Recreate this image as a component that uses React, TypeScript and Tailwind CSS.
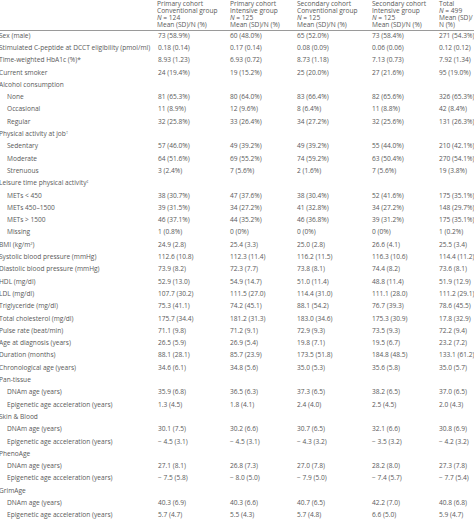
import React from "react";

type Row = { label: React.ReactNode; indent?: boolean; values?: string[] };

const rows: Row[] = [
  { label: "Sex (male)", values: ["73 (58.9%)", "60 (48.0%)", "65 (52.0%)", "73 (58.4%)", "271 (54.3%)"] },
  { label: "Stimulated C-peptide at DCCT eligibility (pmol/ml)", values: ["0.18 (0.14)", "0.17 (0.14)", "0.08 (0.09)", "0.06 (0.06)", "0.12 (0.12)"] },
  { label: "Time-weighted HbA1c (%)*", values: ["8.93 (1.23)", "6.93 (0.72)", "8.73 (1.18)", "7.13 (0.73)", "7.92 (1.34)"] },
  { label: "Current smoker", values: ["24 (19.4%)", "19 (15.2%)", "25 (20.0%)", "27 (21.6%)", "95 (19.0%)"] },
  { label: "Alcohol consumption" },
  { label: "None", indent: true, values: ["81 (65.3%)", "80 (64.0%)", "83 (66.4%)", "82 (65.6%)", "326 (65.3%)"] },
  { label: "Occasional", indent: true, values: ["11 (8.9%)", "12 (9.6%)", "8 (6.4%)", "11 (8.8%)", "42 (8.4%)"] },
  { label: "Regular", indent: true, values: ["32 (25.8%)", "33 (26.4%)", "34 (27.2%)", "32 (25.6%)", "131 (26.3%)"] },
  { label: <>Physical activity at job<sup className="text-[4px]">†</sup></> },
  { label: "Sedentary", indent: true, values: ["57 (46.0%)", "49 (39.2%)", "49 (39.2%)", "55 (44.0%)", "210 (42.1%)"] },
  { label: "Moderate", indent: true, values: ["64 (51.6%)", "69 (55.2%)", "74 (59.2%)", "63 (50.4%)", "270 (54.1%)"] },
  { label: "Strenuous", indent: true, values: ["3 (2.4%)", "7 (5.6%)", "2 (1.6%)", "7 (5.6%)", "19 (3.8%)"] },
  { label: <>Leisure time physical activity<sup className="text-[4px]">‡</sup></> },
  { label: "METs < 450", indent: true, values: ["38 (30.7%)", "47 (37.6%)", "38 (30.4%)", "52 (41.6%)", "175 (35.1%)"] },
  { label: "METs 450–1500", indent: true, values: ["39 (31.5%)", "34 (27.2%)", "41 (32.8%)", "34 (27.2%)", "148 (29.7%)"] },
  { label: "METs > 1500", indent: true, values: ["46 (37.1%)", "44 (35.2%)", "46 (36.8%)", "39 (31.2%)", "175 (35.1%)"] },
  { label: "Missing", indent: true, values: ["1 (0.8%)", "0 (0%)", "0 (0%)", "0 (0%)", "1 (0.2%)"] },
  { label: <>BMI (kg/m<sup className="text-[4px]">2</sup>)</>, values: ["24.9 (2.8)", "25.4 (3.3)", "25.0 (2.8)", "26.6 (4.1)", "25.5 (3.4)"] },
  { label: "Systolic blood pressure (mmHg)", values: ["112.6 (10.8)", "112.3 (11.4)", "116.2 (11.5)", "116.3 (10.6)", "114.4 (11.2)"] },
  { label: "Diastolic blood pressure (mmHg)", values: ["73.9 (8.2)", "72.3 (7.7)", "73.8 (8.1)", "74.4 (8.2)", "73.6 (8.1)"] },
  { label: "HDL (mg/dl)", values: ["52.9 (13.0)", "54.9 (14.7)", "51.0 (11.4)", "48.8 (11.4)", "51.9 (12.9)"] },
  { label: "LDL (mg/dl)", values: ["107.7 (30.2)", "111.5 (27.0)", "114.4 (31.0)", "111.1 (28.0)", "111.2 (29.1)"] },
  { label: "Triglyceride (mg/dl)", values: ["75.3 (41.1)", "74.2 (45.1)", "88.1 (54.2)", "76.7 (39.3)", "78.6 (45.5)"] },
  { label: "Total cholesterol (mg/dl)", values: ["175.7 (34.4)", "181.2 (31.3)", "183.0 (34.6)", "175.3 (30.9)", "17.8 (32.9)"] },
  { label: "Pulse rate (beat/min)", values: ["71.1 (9.8)", "71.2 (9.1)", "72.9 (9.3)", "73.5 (9.3)", "72.2 (9.4)"] },
  { label: "Age at diagnosis (years)", values: ["26.5 (5.9)", "26.9 (5.4)", "19.8 (7.1)", "19.5 (6.7)", "23.2 (7.2)"] },
  { label: "Duration (months)", values: ["88.1 (28.1)", "85.7 (23.9)", "173.5 (51.8)", "184.8 (48.5)", "133.1 (61.2)"] },
  { label: "Chronological age (years)", values: ["34.6 (6.1)", "34.8 (5.6)", "35.0 (5.3)", "35.6 (5.8)", "35.0 (5.7)"] },
  { label: "Pan-tissue" },
  { label: "DNAm age (years)", indent: true, values: ["35.9 (6.8)", "36.5 (6.3)", "37.3 (6.5)", "38.2 (6.5)", "37.0 (6.5)"] },
  { label: "Epigenetic age acceleration (years)", indent: true, values: ["1.3 (4.5)", "1.8 (4.1)", "2.4 (4.0)", "2.5 (4.5)", "2.0 (4.3)"] },
  { label: "Skin & Blood" },
  { label: "DNAm age (years)", indent: true, values: ["30.1 (7.5)", "30.2 (6.6)", "30.7 (6.5)", "32.1 (6.6)", "30.8 (6.9)"] },
  { label: "Epigenetic age acceleration (years)", indent: true, values: ["− 4.5 (3.1)", "− 4.5 (3.1)", "− 4.3 (3.2)", "− 3.5 (3.2)", "− 4.2 (3.2)"] },
  { label: "PhenoAge" },
  { label: "DNAm age (years)", indent: true, values: ["27.1 (8.1)", "26.8 (7.3)", "27.0 (7.8)", "28.2 (8.0)", "27.3 (7.8)"] },
  { label: "Epigenetic age acceleration (years)", indent: true, values: ["− 7.5 (5.8)", "− 8.0 (5.0)", "− 7.9 (5.0)", "− 7.4 (5.7)", "− 7.7 (5.4)"] },
  { label: "GrimAge" },
  { label: "DNAm age (years)", indent: true, values: ["40.3 (6.9)", "40.3 (6.6)", "40.7 (6.5)", "42.2 (7.0)", "40.8 (6.8)"] },
  { label: "Epigenetic age acceleration (years)", indent: true, values: ["5.7 (4.7)", "5.5 (4.3)", "5.7 (4.8)", "6.6 (5.0)", "5.9 (4.7)"] },
];

const headers: React.ReactNode[][] = [
  ["Primary cohort", "Conventional group", <><i>N</i> = 124</>, "Mean (SD)/N (%)"],
  ["Primary cohort", "Intensive group", <><i>N</i> = 125</>, "Mean (SD)/N (%)"],
  ["Secondary cohort", "Conventional group", <><i>N</i> = 125</>, "Mean (SD)/N (%)"],
  ["Secondary cohort", "Intensive group", <><i>N</i> = 125</>, "Mean (SD)/N (%)"],
  ["Total", <><i>N</i> = 499</>, "Mean (SD)/", "N (%)"],
];

const cols = "grid grid-cols-[158px_73px_67px_75px_67px_1fr]";

export default function App() {
  return (
    <div
      className="w-[474px] h-[519px] overflow-hidden bg-white text-[#595959] text-[6.6px] leading-[7px] whitespace-nowrap"
      style={{ fontFamily: '"Open Sans", "Liberation Sans", sans-serif' }}
    >
      <div className="-ml-[1px]">
        <div className={`${cols} h-[31px] border-b border-[#9a9a9a]`}>
          <div />
          {headers.map((h, i) => (
            <div key={i} className="flex flex-col">
              {h.map((line, j) => (
                <span key={j}>{line}</span>
              ))}
            </div>
          ))}
        </div>
        {rows.map((r, i) => (
          <div key={i} className={`${cols} ${i === 0 ? "h-[13px] pt-[1px]" : "h-[12.3px]"}`}>
            <div className={r.indent ? "pl-[8px]" : ""}>{r.label}</div>
            {(r.values ?? []).map((v, j) => (
              <div key={j} className={j === 0 ? "pl-[1px]" : ""}>{v}</div>
            ))}
          </div>
        ))}
      </div>
    </div>
  );
}
